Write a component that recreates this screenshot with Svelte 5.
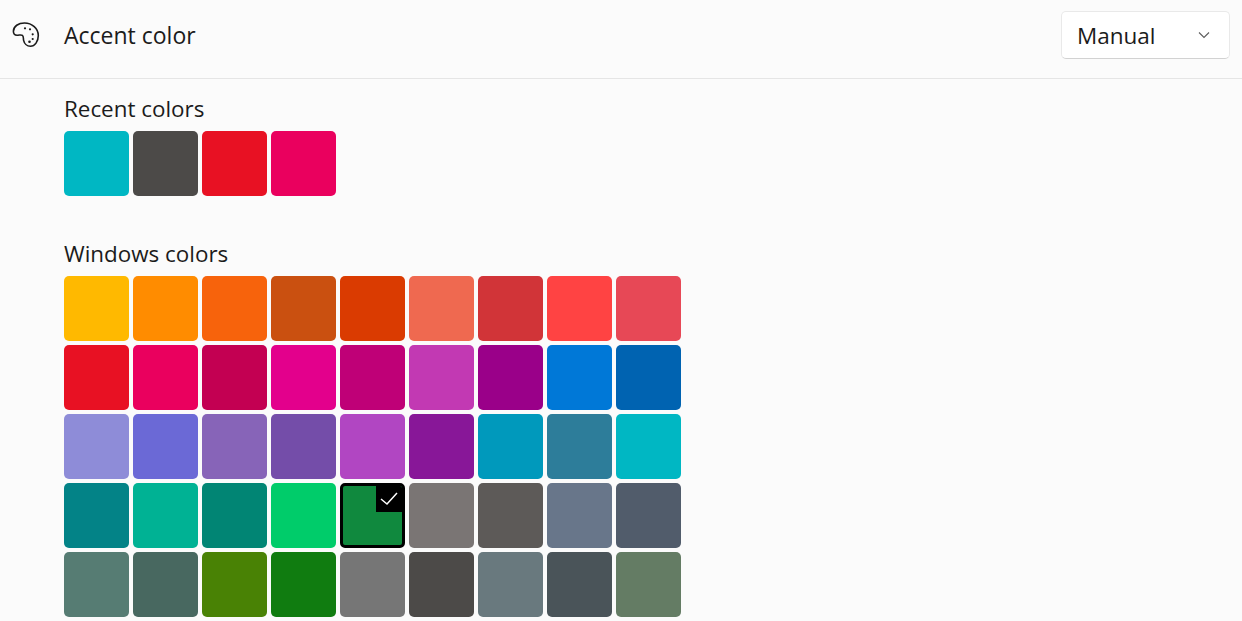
<script lang="ts">
	const recent = ['#00b7c3', '#4c4a48', '#e81123', '#ea005e'];
	const windows = [
		'#ffb900', '#ff8c00', '#f7630c', '#ca5010', '#da3b01', '#ef6950', '#d13438', '#ff4343', '#e74856',
		'#e81123', '#ea005e', '#c30052', '#e3008c', '#bf0077', '#c239b3', '#9a0089', '#0078d7', '#0063b1',
		'#8e8cd8', '#6b69d6', '#8764b8', '#744da9', '#b146c2', '#881798', '#0099bc', '#2d7d9a', '#00b7c3',
		'#038387', '#00b294', '#018574', '#00cc6a', '#10893e', '#7a7574', '#5d5a58', '#68768a', '#515c6b',
		'#567c73', '#486860', '#498205', '#107c10', '#767676', '#4c4a48', '#69797e', '#4a5459', '#647c64'
	];
	const selected = '#10893e';
</script>

<div class="page">
	<header class="header">
		<div class="title">
			<svg width="28" height="28" viewBox="0 0 28 28" fill="none" aria-hidden="true">
				<path
					d="M12.500 2C6.500 2 1.400 5.300 1.400 10.300c0 2.500 1.600 4 3.700 4 2.200 0 3.900-1 5.300.1 1.400 1.100.8 3 1.200 4.900.7 3.100 3.300 6 6.800 6 4.500 0 7.900-4.900 7.900-10.800C26.300 7.500 20 2 12.500 2z"
					stroke="#1b1b1b"
					stroke-width="1.600"
					stroke-linejoin="round"
				/>
				<circle cx="13" cy="7.300" r="1.100" fill="#1b1b1b" />
				<circle cx="18" cy="8.300" r="1.100" fill="#1b1b1b" />
				<circle cx="20.700" cy="13.300" r="1.100" fill="#1b1b1b" />
				<circle cx="20.700" cy="18" r="1.100" fill="#1b1b1b" />
				<circle cx="17.500" cy="20.700" r="1.300" fill="#1b1b1b" />
			</svg>
			<span>Accent color</span>
		</div>
		<button type="button" class="select">
			<span>Manual</span>
			<svg width="12" height="12" viewBox="0 0 12 12" fill="none" aria-hidden="true">
				<path d="M1 3.500 6 8.500l5-5" stroke="#5c5c5c" stroke-width="1.100" />
			</svg>
		</button>
	</header>

	<section class="section recent">
		<h2>Recent colors</h2>
		<div class="swatches">
			{#each recent as color}
				<div class="swatch" style:background={color}></div>
			{/each}
		</div>
	</section>

	<section class="section">
		<h2>Windows colors</h2>
		<div class="swatches">
			{#each windows as color}
				<div class="swatch" class:selected={color === selected} style:background={color}>
					{#if color === selected}
						<span class="check">
							<svg width="18" height="18" viewBox="0 0 18 18" fill="none" aria-hidden="true">
								<path d="M1 9l6 5L17 3" stroke="#fff" stroke-width="1.500" />
							</svg>
						</span>
					{/if}
				</div>
			{/each}
		</div>
	</section>
</div>

<style>
	:global(body) {
		background: #fbfbfb;
		overflow: hidden;
	}

	.page {
		color: #1b1b1b;
		font-family: 'Open Sans', 'Noto Sans', sans-serif;
		height: 621px;
		overflow: hidden;
	}

	.header {
		align-items: center;
		border-bottom: 1px solid #e5e5e5;
		box-sizing: border-box;
		display: flex;
		height: 79px;
		justify-content: space-between;
		padding: 0 12px 8px 12px;
	}

	.title {
		align-items: center;
		display: flex;
		font-size: 23px;
		gap: 24px;
	}

	.select {
		align-items: center;
		background: #fff;
		border: 1px solid #e9e9e9;
		border-bottom-color: #d2d2d2;
		border-radius: 5px;
		box-sizing: border-box;
		color: #1b1b1b;
		display: flex;
		font-family: inherit;
		font-size: 22.500px;
		height: 48px;
		justify-content: space-between;
		padding: 0 19px 0 15px;
		width: 169px;
	}

	.section {
		padding-left: 64px;
	}

	.recent {
		margin-bottom: 41px;
		padding-top: 13px;
	}

	h2 {
		font-size: 22.400px;
		font-weight: 400;
		line-height: 34px;
		margin: 0 0 5px;
	}

	.swatches {
		display: grid;
		gap: 4px;
		grid-template-columns: repeat(9, 65px);
		grid-auto-rows: 65px;
	}

	.swatch {
		border-radius: 5px;
		box-sizing: border-box;
		position: relative;
	}

	.selected {
		border: 3px solid #000;
		overflow: hidden;
	}

	.check {
		align-items: center;
		background: #000;
		display: flex;
		height: 26px;
		justify-content: center;
		position: absolute;
		right: 0;
		top: 0;
		width: 26px;
	}
</style>
